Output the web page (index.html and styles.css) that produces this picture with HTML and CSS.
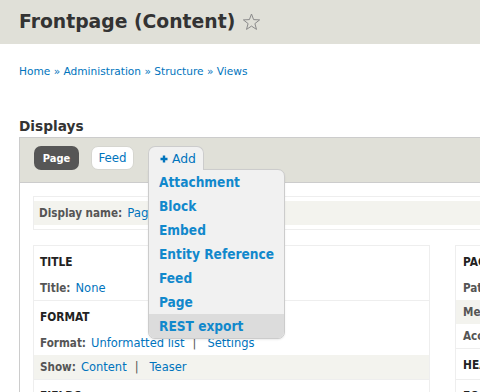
FILE: index.html
```html
<!DOCTYPE html>
<html lang="en">
<head>
<meta charset="utf-8">
<title>Frontpage (Content)</title>
<link rel="stylesheet" href="styles.css">
</head>
<body>
<header class="page-header">
  <h1 class="page-title">Frontpage (Content)
    <svg class="star" width="19" height="18" viewBox="0 0 19 18" aria-hidden="true"><path d="M9.5 1 L11.6 6.6 L17.6 6.9 L12.9 10.6 L14.5 16.4 L9.5 13.1 L4.5 16.4 L6.1 10.6 L1.4 6.9 L7.4 6.6 Z" fill="none" stroke="#8a8a8a" stroke-width="1" stroke-linejoin="round"/></svg>
  </h1>
</header>
<nav class="breadcrumb"><a href="#">Home</a> » <a href="#">Administration</a> » <a href="#">Structure</a> » <a href="#">Views</a></nav>
<section class="displays-section">
  <h2 class="section-title">Displays</h2>
  <div class="displays">
    <div class="tabs-bar">
      <span class="tab tab-active">Page</span>
      <a class="tab tab-link" href="#">Feed</a>
      <div class="add-menu">
        <a class="add-tab" href="#"><svg class="plus" width="8" height="8" viewBox="0 0 8 8" aria-hidden="true"><path d="M4 0.5 V7.5 M0.5 4 H7.5" stroke="#0074bd" stroke-width="2.4"/></svg>Add</a>
        <ul class="add-list">
          <li><a href="#">Attachment</a></li>
          <li><a href="#">Block</a></li>
          <li><a href="#">Embed</a></li>
          <li><a href="#">Entity Reference</a></li>
          <li><a href="#">Feed</a></li>
          <li><a href="#">Page</a></li>
          <li class="is-hover"><a href="#">REST export</a></li>
        </ul>
      </div>
    </div>
    <div class="display-body">
      <div class="display-name">
        <div class="display-name-bar"><strong class="label">Display name:</strong> <a href="#">Page</a></div>
      </div>
      <div class="columns">
        <div class="col">
          <div class="bucket">
            <h3 class="bucket-title">Title</h3>
            <div class="row"><strong class="label">Title:</strong> <a href="#">None</a></div>
          </div>
          <div class="bucket">
            <h3 class="bucket-title">Format</h3>
            <div class="row"><strong class="label">Format:</strong> <a href="#">Unformatted list</a><span class="sep">|</span><a href="#">Settings</a></div>
            <div class="row row-even"><strong class="label">Show:</strong> <a href="#">Content</a><span class="sep">|</span><a href="#">Teaser</a></div>
          </div>
          <div class="bucket">
            <h3 class="bucket-title">Fields</h3>
            <div class="row">The selected style or row format does not use fields.</div>
          </div>
        </div>
        <div class="col col-side">
          <div class="bucket">
            <h3 class="bucket-title">Page settings</h3>
            <div class="row"><strong class="label">Path:</strong> <a href="#">/node</a></div>
            <div class="row row-even"><strong class="label">Menu:</strong> <a href="#">No menu</a></div>
            <div class="row"><strong class="label">Access:</strong> <a href="#">Permission</a><span class="sep">|</span><a href="#">View published content</a></div>
          </div>
          <div class="bucket">
            <h3 class="bucket-title">Header</h3>
          </div>
          <div class="bucket">
            <h3 class="bucket-title">Footer</h3>
          </div>
        </div>
      </div>
    </div>
  </div>
</section>
</body>
</html>
```
FILE: styles.css
```css
html {
  overflow: hidden;
}
body {
  margin: 0;
  font-family: "DejaVu Sans", Verdana, sans-serif;
  color: #333;
  background: #fff;
}
a {
  color: #0074bd;
  text-decoration: none;
}
ul {
  list-style: none;
  margin: 0;
  padding: 0;
}

/* Header */
.page-header {
  height: 44px;
  background: #e0e0d8;
  padding-left: 19px;
  display: flex;
  align-items: center;
}
.page-title {
  margin: 0;
  font-size: 18.8px;
  line-height: 22px;
  font-weight: bold;
  color: #333;
  display: flex;
  align-items: center;
  gap: 7px;
}
.star {
  display: block;
  margin-top: -1px;
}

/* Breadcrumb */
.breadcrumb {
  margin: 19px 0 0 19px;
  font-size: 10.6px;
  line-height: 16px;
  color: #0074bd;
}

/* Displays */
.displays-section {
  overflow: hidden;
}
.section-title {
  margin: 38px 0 2px 19px;
  font-size: 13.7px;
  line-height: 18px;
  font-weight: bold;
  color: #333;
}
.displays {
  margin-left: 19px;
  width: 760px;
  border: 1px solid #ccc;
}
.tabs-bar {
  background: #e0e0d8;
  border-bottom: 1px solid #ccc;
  padding: 8px 14px 12px;
  height: 24px;
  display: flex;
  align-items: flex-start;
  gap: 12px;
}
.tab {
  height: 24px;
  box-sizing: border-box;
  border-radius: 7px;
  display: flex;
  align-items: center;
  justify-content: center;
}
.tab-active {
  width: 45px;
  background: #565656;
  color: #fff;
  font-weight: bold;
  font-size: 11px;
  font-stretch: condensed;
}
.tab-link {
  width: 43px;
  background: #fff;
  border: 1px solid #d6d6d0;
  font-size: 11.8px;
}
.add-menu {
  position: relative;
  margin-left: 2px;
}
.add-tab {
  position: relative;
  z-index: 2;
  width: 56px;
  height: 24px;
  box-sizing: border-box;
  background: #f1f1f1;
  border: 1px solid #ccc;
  border-bottom: none;
  border-radius: 7px 7px 0 0;
  display: flex;
  align-items: center;
  gap: 4px;
  padding-left: 11px;
  font-size: 12.4px;
}
.plus {
  display: block;
}
.add-list {
  position: absolute;
  z-index: 1;
  top: 23px;
  left: 0;
  width: 137px;
  box-sizing: border-box;
  background: #f1f1f1;
  border: 1px solid #ccc;
  border-radius: 0 7px 7px 7px;
  overflow: hidden;
  box-shadow: 0 1px 2px rgba(0, 0, 0, 0.08);
}
.add-list li {
  height: 24px;
  display: flex;
  align-items: center;
  padding-left: 10px;
}
.add-list a {
  color: #1188cc;
  font-weight: bold;
  font-size: 13.6px;
  font-stretch: condensed;
}
.add-list .is-hover {
  background: #dcdcdc;
}

/* Display body */
.display-body {
  padding: 13px 13px 0;
}
.display-name {
  border: 1px solid #eee;
  padding: 4px 0;
}
.display-name-bar {
  height: 24px;
  background: #f3f3ee;
  display: flex;
  align-items: center;
  padding-left: 5px;
  font-size: 11.8px;
  gap: 5px;
}
.label {
  color: #555;
  font-weight: bold;
  font-size: 11.6px;
  font-stretch: condensed;
}
.columns {
  margin-top: 15px;
  display: grid;
  grid-template-columns: 397px 300px;
  column-gap: 25px;
  align-items: start;
}
.col {
  border: 1px solid #eee;
}
.bucket {
  padding-top: 8px;
}
.bucket + .bucket {
  border-top: 1px solid #eee;
}
.bucket-title {
  margin: 0 0 6px;
  padding-left: 6px;
  font-size: 11.8px;
  line-height: 16px;
  font-weight: bold;
  font-stretch: condensed;
  text-transform: uppercase;
  color: #222;
}
.col-side .bucket-title,
.col-side .row {
  padding-left: 7px;
}
.row {
  height: 24px;
  display: flex;
  align-items: center;
  padding-left: 6px;
  font-size: 11.5px;
  gap: 5px;
  white-space: nowrap;
}
.row-even {
  background: #f3f3ee;
}
.sep {
  color: #555;
  margin: 0 6px 0 3px;
}
```
